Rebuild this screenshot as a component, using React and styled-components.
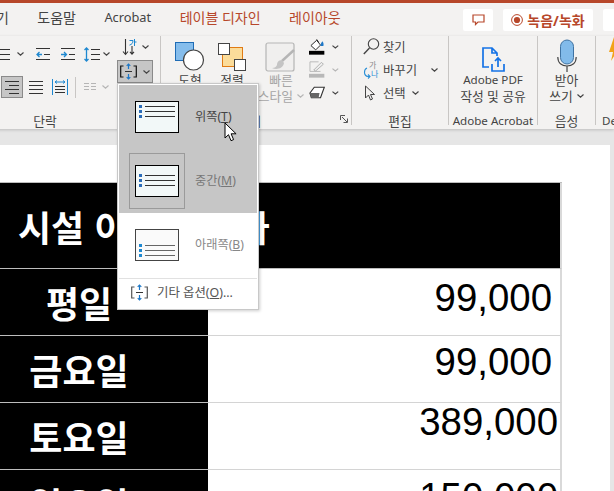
import styled, { createGlobalStyle } from "styled-components";

const GlobalStyle = createGlobalStyle`
  html, body { margin: 0; padding: 0; background: #e6e6e6; }
  * { box-sizing: border-box; }
`;

const uiFont = `"Noto Sans", "Noto Sans CJK KR", sans-serif`;

const Page = styled.div`
  width: 614px;
  height: 491px;
  overflow: hidden;
  position: relative;
  display: flex;
  flex-direction: column;
  font-family: ${uiFont};
  color: #444;
  background: #e6e6e6;
`;

const TitleStrip = styled.div`
  height: 3px;
  flex: none;
  background: #b7472a;
`;

const TabRow = styled.div`
  height: 33px;
  flex: none;
  display: flex;
  align-items: center;
  gap: 28.5px;
  margin-left: -17px;
  background: #f3f2f1;
  padding-bottom: 6px;
`;

const Tab = styled.span`
  font-size: ${(p) => p.$size || 14}px;
  white-space: nowrap;
  color: ${(p) => (p.$accent ? "#b7472a" : "#444")};
`;

const TabActions = styled.div`
  margin-left: auto;
  display: flex;
  gap: 10px;
  margin-right: -19px;
  padding-top: 6px;
`;

const ActionButton = styled.button`
  height: 22px;
  width: ${(p) => p.$w}px;
  border: 0;
  border-radius: 2px;
  padding: 0;
  background: #fff;
  display: flex;
  align-items: center;
  justify-content: center;
  gap: 4px;
  font: 700 14px ${uiFont};
  color: #b7472a;
`;

const Ribbon = styled.div`
  height: 93px;
  flex: none;
  display: flex;
  margin-left: -70px;
  background: #f3f2f1;
  box-shadow: 0 1px 3px rgba(0, 0, 0, 0.18);
  position: relative;
`;

const Group = styled.section`
  width: ${(p) => p.$w}px;
  flex: none;
  height: 89px;
  display: flex;
  flex-direction: column;
  border-right: ${(p) => (p.$last ? "0" : "1px solid #c8c6c4")};
`;

const GroupBody = styled.div`
  height: 76px;
  flex: none;
  display: flex;
  padding-left: ${(p) => p.$pad || 0}px;
`;

const GroupLabel = styled.div`
  height: 16px;
  flex: none;
  display: flex;
  align-items: center;
  justify-content: ${(p) => (p.$pad !== undefined ? "flex-start" : "center")};
  padding-left: ${(p) => p.$pad || 0}px;
  padding-right: ${(p) => (p.$pad !== undefined ? 3 : 0)}px;
  margin-bottom: -3px;
  font-size: ${(p) => p.$size || 12.8}px;
  white-space: nowrap;
`;

const Launcher = styled.svg`
  margin-left: auto;
  margin-top: -2px;
`;

const ToolStack = styled.div`
  width: ${(p) => p.$w}px;
  flex: none;
  display: flex;
  flex-direction: column;
  padding-top: ${(p) => p.$top}px;
  gap: ${(p) => p.$gap}px;
`;

const ToolRow = styled.div`
  display: flex;
  height: ${(p) => p.$h || 22}px;
  align-items: center;
`;

const Tool = styled.div`
  width: ${(p) => p.$w}px;
  height: ${(p) => p.$h || 22}px;
  flex: none;
  display: flex;
  align-items: center;
  justify-content: ${(p) => p.$justify || "center"};
  gap: ${(p) => p.$gap || 0}px;
  margin-left: ${(p) => p.$ml || 0}px;
  background: ${(p) => (p.$active ? "#c6c6c6" : "transparent")};
  border: ${(p) => (p.$active ? "1px solid #8a8a8a" : "0")};
`;

const Divider = styled.div`
  width: 1px;
  height: 21px;
  background: #c8c6c4;
`;

const BigTool = styled.div`
  width: ${(p) => p.$w}px;
  margin-left: ${(p) => p.$ml || 0}px;
  flex: none;
  display: flex;
  flex-direction: column;
  align-items: center;
  font-size: 12.8px;
  line-height: 16px;
  white-space: nowrap;
  color: ${(p) => (p.$off ? "#a6a6a6" : "#444")};
`;

const LatinLine = styled.span`
  font-size: 11.6px;
`;

const BigIcon = styled.div`
  height: 36px;
  display: flex;
  align-items: flex-end;
  justify-content: center;
`;

const TextLine = styled.span`
  display: flex;
  align-items: center;
  gap: 4px;
`;

const SmallColumn = styled.div`
  width: ${(p) => p.$w}px;
  margin-left: ${(p) => p.$ml || 0}px;
  margin-top: -1px;
  display: flex;
  flex-direction: column;
  flex: none;
`;

const SmallRow = styled.div`
  height: 23px;
  display: flex;
  align-items: center;
  gap: ${(p) => p.$gap || 0}px;
  font-size: 12.3px;
  white-space: nowrap;
`;

const Canvas = styled.main`
  flex: 1;
  padding: 16px 4px 0 0;
  min-height: 0;
`;

const Slide = styled.div`
  height: 100%;
  background: #fff;
  padding-top: 37px;
  overflow: hidden;
`;

const Table = styled.div`
  width: 612px;
  margin-left: -50px;
  display: grid;
  grid-template-columns: 258px 354px;
  grid-template-rows: 86px 67px 67px 67px 67px;
  border-top: 1px solid #bdbdbd;
`;

const HeadCell = styled.div`
  grid-column: 1 / span 2;
  background: #000;
  color: #fff;
  font: 700 36px "Liberation Sans", "Noto Sans CJK KR", sans-serif;
  display: flex;
  align-items: center;
  padding-left: 68px;
  white-space: nowrap;
  border-bottom: 1px solid #bdbdbd;
  border-right: 2px solid #d9d9d9;
`;

const DayCell = styled.div`
  background: #000;
  color: #fff;
  font: 700 36px "Noto Sans CJK KR", sans-serif;
  line-height: 1;
  display: flex;
  align-items: center;
  justify-content: center;
  border-bottom: 1px solid #bdbdbd;
`;

const PriceCell = styled.div`
  color: #000;
  font: 400 38.4px/1 "Liberation Sans", sans-serif;
  text-align: right;
  padding-right: ${(p) => p.$right}px;
  padding-top: ${(p) => p.$top}px;
  border-bottom: 1px solid #d4d4d4;
  border-right: 2px solid #d9d9d9;
`;

const Menu = styled.div`
  position: absolute;
  left: 117px;
  top: 83px;
  width: 142px;
  height: 227px;
  padding: 1px;
  background: #fff;
  border: 1px solid #c8c8c8;
  box-shadow: 1px 1px 3px rgba(0, 0, 0, 0.2);
  font-size: 12.2px;
`;

const MenuItem = styled.div`
  height: 64px;
  display: flex;
  align-items: center;
  padding-left: 10px;
  gap: 10px;
  background: ${(p) => (p.$hot ? "#c6c6c6" : "transparent")};
  color: ${(p) => p.$color};
`;

const MenuText = styled.span`
  padding-bottom: 2px;
`;

const ThumbBox = styled.div`
  width: 56px;
  height: 56px;
  display: flex;
  align-items: center;
  justify-content: center;
  border: ${(p) => (p.$selected ? "1px solid #9a9a9a" : "0")};
`;

const MenuRule = styled.div`
  height: 1px;
  margin-top: 1px;
  background: #e1e1e1;
`;

const MenuFoot = styled.div`
  height: 26px;
  display: flex;
  align-items: center;
  gap: 9px;
  padding-left: 12px;
  color: #555;
  font-size: 12.4px;
`;

const Pointer = styled.svg`
  position: absolute;
  left: 106px;
  top: 38px;
`;

const Chevron = ({ off }) => (
  <svg width="7" height="4" viewBox="0 0 7 4" fill="none" stroke={off ? "#b5b5b5" : "#444"} strokeWidth="1.2">
    <path d="M.5.5l3 2.6 3-2.6" />
  </svg>
);

const Lines = ({ w = 14, rows = [1, 6, 11], x = 0, color = "#333" }) => (
  <g stroke={color} strokeWidth="1">
    {rows.map((y) => (
      <path key={y} d={`M${x} ${y + 0.5}h${w}`} />
    ))}
  </g>
);

const Thumb = ({ top, soft }) => (
  <svg width="44" height="32" viewBox="0 0 44 32">
    <rect x=".5" y=".5" width="43" height="31" fill={soft ? "#fafafa" : "#f2f8f8"} stroke={soft ? "#444" : "#000"} />
    {[0, 5, 10].map((d) => (
      <g key={d}>
        <rect x="4" y={top + d - 1} width="3" height="3" fill={soft ? "#1e88d0" : "#2b6cb8"} />
        <path d={`M10 ${top + d + 0.5}h30`} stroke={soft ? "#666" : "#333"} />
      </g>
    ))}
  </svg>
);

const AlignTextIcon = ({ color = "#111" }) => (
  <svg width="17" height="17" viewBox="0 0 17 17" fill="none">
    <path d="M3.500 3H.7v11h2.800M13.500 3h2.800v11h-2.800" stroke={color} strokeWidth="1.2" />
    <path d="M5 8.500h7" stroke="#333" />
    <path d="M8.500 1v5M6.700 2.800l1.800-1.800 1.800 1.800M8.500 11v5M6.700 14.200l1.800 1.800 1.800-1.800" stroke="#1e78c8" strokeWidth="1.2" />
  </svg>
);

function App() {
  return (
    <Page>
      <GlobalStyle />
      <TitleStrip />
      <TabRow>
        <Tab>보기</Tab>
        <Tab>도움말</Tab>
        <Tab $size={12.8}>Acrobat</Tab>
        <Tab $accent>테이블 디자인</Tab>
        <Tab $accent>레이아웃</Tab>
        <TabActions>
          <ActionButton $w={30}>
            <svg width="13" height="12" viewBox="0 0 13 12" fill="none" stroke="#b7472a" strokeWidth="1.2">
              <path d="M1 1h11v7H6L3.500 10.500V8H1z" />
            </svg>
          </ActionButton>
          <ActionButton $w={90}>
            <svg width="12" height="12" viewBox="0 0 12 12">
              <circle cx="6" cy="6" r="5.400" fill="none" stroke="#b7472a" />
              <circle cx="6" cy="6" r="3.100" fill="#b7472a" />
            </svg>
            녹음/녹화
          </ActionButton>
          <ActionButton $w={30} />
        </TabActions>
      </TabRow>
      <Ribbon>
        <Group $w={231}>
          <GroupBody $pad={70}>
            <ToolStack $w={117} $top={7} $gap={11}>
              <ToolRow>
                <Tool $w={30} $justify="flex-start" $gap={7}>
                  <svg width="10" height="13" viewBox="0 0 10 13">
                    <Lines w={10} />
                  </svg>
                  <Chevron />
                </Tool>
                <Tool $w={26}>
                  <svg width="15" height="13" viewBox="0 0 15 13" fill="none">
                    <path d="M0 .5h14M8 6.500h6M0 11.500h14" stroke="#333" />
                    <path d="M6 6.500H1M3.500 4L1 6.500 3.500 9" stroke="#1e88d0" strokeWidth="1.3" />
                  </svg>
                </Tool>
                <Tool $w={24}>
                  <svg width="15" height="13" viewBox="0 0 15 13" fill="none">
                    <path d="M0 .5h14M8 6.500h6M0 11.500h14" stroke="#333" />
                    <path d="M0 6.500h5M3 4l2.500 2.500L3 9" stroke="#1e88d0" strokeWidth="1.3" />
                  </svg>
                </Tool>
                <Tool $w={34} $gap={3}>
                  <svg width="16" height="15" viewBox="0 0 16 15" fill="none">
                    <path d="M7 2.500h9M7 7.500h9M7 12.500h9" stroke="#333" />
                    <path d="M2.500 1v13M.5 3l2-2 2 2M.5 12l2 2 2-2" stroke="#1e88d0" strokeWidth="1.3" />
                  </svg>
                  <Chevron />
                </Tool>
              </ToolRow>
              <ToolRow>
                <Tool $w={22} $ml={1} $active>
                  <svg width="14" height="13" viewBox="0 0 14 13">
                    <Lines w={14} rows={[0]} />
                    <Lines w={10} x={4} rows={[4]} />
                    <Lines w={14} rows={[8]} />
                    <Lines w={10} x={4} rows={[12]} />
                  </svg>
                </Tool>
                <Tool $w={26}>
                  <svg width="14" height="13" viewBox="0 0 14 13">
                    <Lines rows={[0, 4, 8, 12]} />
                  </svg>
                </Tool>
                <Tool $w={22}>
                  <svg width="16" height="16" viewBox="0 0 16 16" fill="none">
                    <path d="M.5 0v16M15.500 0v16" stroke="#1e88d0" />
                    <path d="M3 3h10M5 1.500L3 3l2 1.500M11 1.500L13 3l-2 1.500" stroke="#1e88d0" />
                    <path d="M3 7.500h10M3 10.500h10M3 13.500h10" stroke="#333" />
                  </svg>
                </Tool>
                <Tool $w={8}>
                  <Divider />
                </Tool>
                <Tool $w={30} $justify="flex-end" $gap={6}>
                  <svg width="12" height="8" viewBox="0 0 12 8" stroke="#b5b5b5">
                    <path d="M0 .5h5M7 .5h5M0 3.500h5M7 3.500h5M0 6.500h5M7 6.500h5" />
                  </svg>
                  <Chevron off />
                </Tool>
              </ToolRow>
            </ToolStack>
            <ToolStack $w={36} $top={0} $gap={2}>
              <Tool $w={36} $gap={5}>
                <svg width="15" height="17" viewBox="0 0 15 17" fill="none">
                  <path d="M3.500 0v15M1 12.500l2.500 3 2.500-3M10 7v8M8 12.800l2 2.300 2-2.300" stroke="#333" strokeWidth="1.1" />
                  <path d="M7.500 1.500h3.500c0 2.500-1.200 4-3.500 4.600M12.500 0v7M12.500 3h2" stroke="#1e88d0" strokeWidth="1" />
                </svg>
                <Chevron />
              </Tool>
              <Tool $w={36} $h={23} $gap={6} $active>
                <AlignTextIcon />
                <Chevron />
              </Tool>
            </ToolStack>
          </GroupBody>
          <GroupLabel>단락</GroupLabel>
        </Group>

        <Group $w={191}>
          <GroupBody>
            <BigTool $w={36} $ml={11}>
              <BigIcon>
                <svg width="30" height="30" viewBox="0 0 30 30">
                  <rect x=".5" y=".5" width="18" height="18" fill="#85bdec" stroke="#1f6cb5" />
                  <circle cx="18.500" cy="18" r="10" fill="#fff" stroke="#444" strokeWidth="1.2" />
                </svg>
              </BigIcon>
              도형
            </BigTool>
            <BigTool $w={36} $ml={6}>
              <BigIcon>
                <svg width="29" height="29" viewBox="0 0 29 29">
                  <rect x="4.500" y="4.500" width="20" height="19" fill="#fbdc9a" stroke="#e07b14" />
                  <rect x=".5" y=".5" width="11" height="11" fill="#fff" stroke="#444" />
                  <rect x="16.500" y="16.500" width="11" height="11" fill="#fff" stroke="#444" />
                </svg>
              </BigIcon>
              정렬
            </BigTool>
            <BigTool $w={56} $ml={3} $off>
              <BigIcon>
                <svg width="32" height="30" viewBox="0 0 32 30" fill="none">
                  <rect x="1" y="1" width="28" height="28" rx="2" fill="#f0efee" stroke="#b5b5b5" strokeWidth="1.2" />
                  <path d="M29 8L17 19" stroke="#b5b5b5" strokeWidth="2.400" />
                  <path d="M17 18c-4 0-5 3-5 5-1 2-2 3-5 3 4 2 11 1 12-5z" fill="#c4c4c4" />
                </svg>
              </BigIcon>
              빠른
              <TextLine>
                스타일
                <Chevron off />
              </TextLine>
            </BigTool>
            <SmallColumn $w={30}>
              <SmallRow $gap={7}>
                <svg width="17" height="18" viewBox="0 0 17 18" fill="none">
                  <path d="M2 7.500L8 2l4 5-5 5z" fill="#fff" stroke="#222" />
                  <path d="M8 1l2 3" stroke="#222" />
                  <path d="M12 8c0-2 1-4 2-5 1 1 1.500 3 1 5z" fill="#1e78c8" />
                  <rect y="13" width="16" height="4" fill="#000" />
                </svg>
                <Chevron />
              </SmallRow>
              <SmallRow $gap={7}>
                <svg width="17" height="17" viewBox="0 0 17 17" fill="none">
                  <path d="M10 .5H1v10h11" stroke="#b8b8b8" />
                  <path d="M5 9l8-8 2 2-8 7z" fill="#eee" stroke="#b0b0b0" />
                  <rect y="13" width="16" height="4" fill="#b8b8b8" />
                </svg>
                <Chevron off />
              </SmallRow>
              <SmallRow $gap={7}>
                <svg width="17" height="14" viewBox="0 0 17 14">
                  <path d="M5.500 1H16l-4 11H2.500L1 7z" fill="#fff" stroke="#333" strokeWidth="1.2" />
                  <path d="M1 7h10l-1 5H2z" fill="#666" />
                </svg>
                <Chevron />
              </SmallRow>
            </SmallColumn>
          </GroupBody>
          <GroupLabel $pad={65}>
            그리기
            <Launcher width="8" height="8" viewBox="0 0 8 8" fill="none" stroke="#555">
              <path d="M.5 5V.5H5M2 2l5 5M3.500 7.500h4v-4" />
            </Launcher>
          </GroupLabel>
        </Group>

        <Group $w={97}>
          <GroupBody $pad={11}>
            <SmallColumn $w={80}>
              <SmallRow $gap={3}>
                <svg width="17" height="17" viewBox="0 0 17 17" fill="none" stroke="#444" strokeWidth="1.1">
                  <circle cx="10.500" cy="6" r="5.200" />
                  <path d="M6.500 10L.8 16" strokeWidth="1.4" />
                </svg>
                찾기
              </SmallRow>
              <SmallRow $gap={3}>
                <svg width="17" height="18" viewBox="0 0 17 18" fill="none" stroke="#2a8fd6" strokeWidth="1.1">
                  <path d="M4 7C.5 8.500.5 15 5 15.500h2M5 13.500l2 2-2 2" />
                  <text x="6" y="7" fontSize="8" fill="#8c8c8c" stroke="none">가</text>
                  <text x="8" y="16" fontSize="8" fill="#2a8fd6" stroke="none">나</text>
                </svg>
                바꾸기
                <Tool $w={14} $ml={8}>
                  <Chevron />
                </Tool>
              </SmallRow>
              <SmallRow $gap={6}>
                <svg width="14" height="16" viewBox="0 0 14 16" fill="none" stroke="#444">
                  <path d="M2.500 1v12l3-3 2 5 2-1-2-4.500h4z" />
                </svg>
                선택
                <Chevron />
              </SmallRow>
            </SmallColumn>
          </GroupBody>
          <GroupLabel>편집</GroupLabel>
        </Group>

        <Group $w={89}>
          <GroupBody>
            <BigTool $w={88}>
              <BigIcon>
                <svg width="24" height="25" viewBox="0 0 24 25" fill="none" stroke="#1473e6" strokeWidth="1.7">
                  <path d="M8 20H2V1h9l5 5v3M11 1v5h5" />
                  <path d="M11 17v7h12v-7M17 20v-9M14 14l3-3 3 3" />
                </svg>
              </BigIcon>
              <LatinLine>Adobe PDF</LatinLine>
              <span>작성 및 공유</span>
            </BigTool>
          </GroupBody>
          <GroupLabel $size={11.6}>Adobe Acrobat</GroupLabel>
        </Group>

        <Group $w={58}>
          <GroupBody>
            <BigTool $w={57}>
              <BigIcon>
                <svg width="20" height="33" viewBox="0 0 20 33" fill="none">
                  <rect x="3.500" y="1" width="13" height="24" rx="6.500" fill="#82bbea" stroke="#3f73a3" />
                  <path d="M.8 18c0 6 4 9 9.200 9s9.200-3 9.200-9M10 27v6" stroke="#444" strokeWidth="1.2" />
                </svg>
              </BigIcon>
              받아
              <TextLine>
                쓰기
                <Chevron />
              </TextLine>
            </BigTool>
          </GroupBody>
          <GroupLabel>음성</GroupLabel>
        </Group>

        <Group $w={80} $last>
          <GroupBody $pad={13}>
            <BigIcon>
              <svg width="10" height="30" viewBox="0 0 10 30" style={{ marginBottom: 6 }}>
                <path d="M5 1L0 16h4l-2 9 8-13H5l3-11z" fill="#f2a218" />
              </svg>
            </BigIcon>
          </GroupBody>
          <GroupLabel $pad={6} $size={11.6}>De</GroupLabel>
        </Group>
      </Ribbon>

      <Canvas>
        <Slide>
          <Table>
            <HeadCell>시설 이용 대여가</HeadCell>
            <DayCell>평일</DayCell>
            <PriceCell $right={8} $top={10}>99,000</PriceCell>
            <DayCell>금요일</DayCell>
            <PriceCell $right={8} $top={7}>99,000</PriceCell>
            <DayCell>토요일</DayCell>
            <PriceCell $right={2} $top={0}>389,000</PriceCell>
            <DayCell>일요일</DayCell>
            <PriceCell $right={2} $top={8}>150,000</PriceCell>
          </Table>
        </Slide>
      </Canvas>

      <Menu>
        <MenuItem $hot $color="#444">
          <ThumbBox>
            <Thumb top={5} />
          </ThumbBox>
          <MenuText>위쪽(<u>T</u>)</MenuText>
        </MenuItem>
        <MenuItem $hot $color="#777">
          <ThumbBox $selected>
            <Thumb top={10} />
          </ThumbBox>
          <MenuText>중간(<u>M</u>)</MenuText>
        </MenuItem>
        <MenuItem $color="#888">
          <ThumbBox>
            <Thumb top={16} soft />
          </ThumbBox>
          <MenuText>아래쪽(<u>B</u>)</MenuText>
        </MenuItem>
        <MenuRule />
        <MenuFoot>
          <AlignTextIcon color="#555" />
          <span>기타 옵션(<u>O</u>)...</span>
        </MenuFoot>
        <Pointer width="14" height="21" viewBox="0 0 14 21">
          <path d="M1 1v15l3.500-3.300 2.500 6 2.600-1.100-2.500-5.800h5z" fill="#fff" stroke="#000" />
        </Pointer>
      </Menu>
    </Page>
  );
}

export default App;
